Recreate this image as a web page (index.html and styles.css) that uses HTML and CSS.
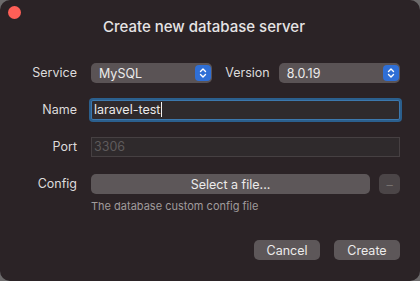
FILE: index.html
```html
<!DOCTYPE html>
<html lang="en">
<head>
    <meta charset="UTF-8">
    <meta name="viewport" content="width=device-width, initial-scale=1.0">
    <title>Create new database server</title>
    <link rel="stylesheet" href="styles.css">
</head>
<body>

    <div class="window">
        <span class="close-dot"></span>
        <h1 class="title">Create new database server</h1>

        <div class="form">
            <label class="label">Service</label>
            <div class="row-pair">
                <div class="select">
                    <span>MySQL</span>
                    <span class="stepper">
                        <svg width="16" height="16" viewBox="0 0 16 16"><path d="M5.5 6.5 8 4l2.5 2.5M5.5 9.5 8 12l2.5-2.5" fill="none" stroke="#fff" stroke-width="1.4" stroke-linecap="round" stroke-linejoin="round"/></svg>
                    </span>
                </div>
                <label class="label label-inline">Version</label>
                <div class="select">
                    <span>8.0.19</span>
                    <span class="stepper">
                        <svg width="16" height="16" viewBox="0 0 16 16"><path d="M5.5 6.5 8 4l2.5 2.5M5.5 9.5 8 12l2.5-2.5" fill="none" stroke="#fff" stroke-width="1.4" stroke-linecap="round" stroke-linejoin="round"/></svg>
                    </span>
                </div>
            </div>

            <label class="label">Name</label>
            <div class="input input-focus">laravel-test<span class="caret"></span></div>

            <label class="label">Port</label>
            <div class="input placeholder">3306</div>

            <label class="label">Config</label>
            <div class="file-row">
                <button class="btn file-btn">Select a file...</button>
                <button class="btn clear-btn">&ndash;</button>
            </div>

            <span></span>
            <p class="help">The database custom config file</p>
        </div>

        <div class="actions">
            <button class="btn action">Cancel</button>
            <button class="btn action">Create</button>
        </div>
    </div>

</body>
</html>
```

FILE: styles.css
```css
body {
    margin: 0;
    background-color: #6c6a6b;
    font-family: Inter, "Liberation Sans", sans-serif;
}

.window {
    position: relative;
    width: 420px;
    height: 281px;
    box-sizing: border-box;
    background-color: #2b2326;
    border-radius: 10px;
    color: #dedcdd;
    padding-top: 17px;
}

.close-dot {
    position: absolute;
    left: 8px;
    top: 6px;
    width: 13px;
    height: 13px;
    border-radius: 50%;
    background-color: #fe5f57;
}

.title {
    margin: 0;
    padding-right: 12px;
    font-size: 15px;
    font-weight: 500;
    line-height: 20px;
    text-align: center;
    color: #e6e4e5;
}

.form {
    display: grid;
    grid-template-columns: 77px 1fr;
    column-gap: 14px;
    row-gap: 17px;
    margin-top: 26px;
    padding-right: 20px;
    font-size: 12.5px;
}

.label {
    text-align: right;
    line-height: 20px;
    color: #dddbdc;
}

.label-inline {
    margin-left: 13px;
    margin-right: 9px;
}

.row-pair {
    display: flex;
    align-items: center;
}

.select {
    flex: 1;
    display: flex;
    align-items: center;
    justify-content: space-between;
    height: 20px;
    padding: 0 1px 0 8px;
    background-color: #5a5355;
    border-radius: 5px;
    color: #ecebeb;
}

.stepper {
    display: flex;
    width: 16px;
    height: 16px;
    background-color: #2f6fd6;
    border-radius: 4px;
}

.input {
    height: 20px;
    box-sizing: border-box;
    padding: 0 2px;
    background-color: #2f2a2c;
    border: 1px solid #464042;
    color: #ecebeb;
    line-height: 18px;
}

.input-focus {
    border-color: #3c78ad;
    box-shadow: 0 0 0 2px #2b5f8d;
    border-radius: 2px;
}

.caret {
    display: inline-block;
    width: 1px;
    height: 15px;
    margin-left: 1px;
    vertical-align: -3px;
    background-color: #f2f2f2;
}

.placeholder {
    color: #5e5a5b;
}

.file-row {
    display: flex;
    gap: 9px;
}

.btn {
    height: 20px;
    border: none;
    border-radius: 5px;
    background-color: #5d5759;
    color: #ecebeb;
    font-family: inherit;
    font-size: 12.5px;
    padding: 0;
}

.file-btn {
    flex: 1;
}

.clear-btn {
    width: 21px;
    background-color: #4b4547;
    color: #76716f;
}

.help {
    margin: -12px 0 0;
    font-size: 11px;
    color: #a09b9c;
}

.actions {
    display: flex;
    justify-content: flex-end;
    gap: 14px;
    margin-top: 27px;
    padding-right: 20px;
}

.action {
    width: 66px;
}
```
